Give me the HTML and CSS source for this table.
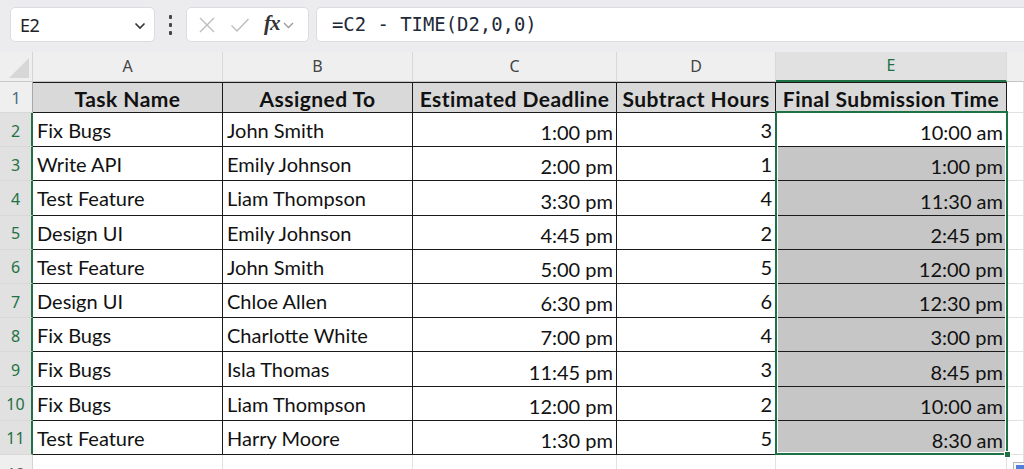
FILE: index.html
```html
<!DOCTYPE html>
<html lang="en">
<head>
<meta charset="utf-8">
<title>Sheet</title>
<link rel="stylesheet" href="styles.css">
</head>
<body>
<div class="app">
  <div class="toolbar">
    <div class="namebox">
      <span class="namebox-text">E2</span>
      <svg class="chev" width="12" height="8" viewBox="0 0 12 8"><path d="M1.5 1.5 L6 6 L10.5 1.5" fill="none" stroke="#333" stroke-width="1.6"/></svg>
    </div>
    <div class="dots"><span></span><span></span><span></span></div>
    <div class="fxbox">
      <svg class="ico" width="18" height="18" viewBox="0 0 18 18"><path d="M2 2 L16 16 M16 2 L2 16" stroke="#bdbdbd" stroke-width="1.4" fill="none"/></svg>
      <svg class="ico" width="20" height="18" viewBox="0 0 20 18"><path d="M1.5 9.5 L7 15 L18.5 3" stroke="#bdbdbd" stroke-width="1.4" fill="none"/></svg>
      <span class="fx">fx</span>
      <svg class="chev-sm" width="11" height="7" viewBox="0 0 11 7"><path d="M1 1 L5.5 5.5 L10 1" fill="none" stroke="#9a9a9a" stroke-width="1.3"/></svg>
    </div>
    <div class="formula">=C2 - TIME(D2,0,0)</div>
  </div>

  <div class="sheet">
    <div class="corner"><span class="tri"></span></div>
    <div class="colh">A</div>
    <div class="colh">B</div>
    <div class="colh">C</div>
    <div class="colh">D</div>
    <div class="colh sel">E</div>
    <div class="colh rest"></div>

    <div class="rowh">1</div>
    <div class="c hd">Task Name</div>
    <div class="c hd">Assigned To</div>
    <div class="c hd">Estimated Deadline</div>
    <div class="c hd">Subtract Hours</div>
    <div class="c hd">Final Submission Time</div>
    <div class="g"></div>

    <div class="rowh sel">2</div><div class="c t">Fix Bugs</div><div class="c t">John Smith</div><div class="c n">1:00 pm</div><div class="c h">3</div><div class="c n act">10:00 am</div><div class="g"></div>
    <div class="rowh sel">3</div><div class="c t">Write API</div><div class="c t">Emily Johnson</div><div class="c n">2:00 pm</div><div class="c h">1</div><div class="c n shade">1:00 pm</div><div class="g"></div>
    <div class="rowh sel">4</div><div class="c t">Test Feature</div><div class="c t">Liam Thompson</div><div class="c n">3:30 pm</div><div class="c h">4</div><div class="c n shade">11:30 am</div><div class="g"></div>
    <div class="rowh sel">5</div><div class="c t">Design UI</div><div class="c t">Emily Johnson</div><div class="c n">4:45 pm</div><div class="c h">2</div><div class="c n shade">2:45 pm</div><div class="g"></div>
    <div class="rowh sel">6</div><div class="c t">Test Feature</div><div class="c t">John Smith</div><div class="c n">5:00 pm</div><div class="c h">5</div><div class="c n shade">12:00 pm</div><div class="g"></div>
    <div class="rowh sel">7</div><div class="c t">Design UI</div><div class="c t">Chloe Allen</div><div class="c n">6:30 pm</div><div class="c h">6</div><div class="c n shade">12:30 pm</div><div class="g"></div>
    <div class="rowh sel">8</div><div class="c t">Fix Bugs</div><div class="c t">Charlotte White</div><div class="c n">7:00 pm</div><div class="c h">4</div><div class="c n shade">3:00 pm</div><div class="g"></div>
    <div class="rowh sel">9</div><div class="c t">Fix Bugs</div><div class="c t">Isla Thomas</div><div class="c n">11:45 pm</div><div class="c h">3</div><div class="c n shade">8:45 pm</div><div class="g"></div>
    <div class="rowh sel">10</div><div class="c t">Fix Bugs</div><div class="c t">Liam Thompson</div><div class="c n">12:00 pm</div><div class="c h">2</div><div class="c n shade">10:00 am</div><div class="g"></div>
    <div class="rowh sel">11</div><div class="c t">Test Feature</div><div class="c t">Harry Moore</div><div class="c n">1:30 pm</div><div class="c h">5</div><div class="c n shade">8:30 am</div><div class="g"></div>

    <div class="rowh last">12</div><div class="g"></div><div class="g"></div><div class="g"></div><div class="g"></div><div class="g"></div><div class="g"></div>

    <div class="selection"><span class="handle"></span></div>
    <div class="qa"></div>
  </div>
</div>
</body>
</html>
```
FILE: styles.css
```css
* { box-sizing: border-box; }
html, body { margin: 0; padding: 0; }
body { width: 1024px; height: 469px; overflow: hidden; background: #fff; font-family: "Lato", "Liberation Sans", sans-serif; }

.app { display: flex; flex-direction: column; height: 469px; }

.toolbar {
  height: 52px;
  background: #ecebee;
  display: flex;
  align-items: flex-start;
  padding: 7px 0 0 10px;
}
.namebox {
  width: 145px; height: 35px;
  background: #fff;
  border: 1px solid #dddbe0;
  border-radius: 5px;
  display: flex; align-items: center; justify-content: space-between;
  padding: 0 8px 0 9px;
  font-family: "Noto Sans", "Open Sans", sans-serif;
  font-size: 18px; color: #222;
}
.namebox-text { letter-spacing: -0.6px; }
.chev { margin-top: 2px; }
.dots {
  width: 31px; height: 35px;
  display: flex; flex-direction: column; align-items: center; justify-content: center; gap: 4px;
}
.dots span { width: 3px; height: 4px; background: #444; border-radius: 1px; }
.fxbox {
  width: 123px; height: 35px;
  background: #fff; border: 1px solid #dddbe0; border-radius: 5px;
  display: flex; align-items: center;
  padding: 0 0 0 11px;
}
.fxbox .ico { margin-right: 14px; }
.fx {
  font-family: "Liberation Serif", serif; font-style: italic; font-weight: bold;
  font-size: 21px; color: #333; letter-spacing: -1px; margin-right: 3px; margin-top: -2px;
}
.chev-sm { margin-top: 1px; }
.formula {
  margin-left: 7px;
  flex: 1; height: 35px;
  background: #fff; border: 1px solid #dddbe0; border-right: 0; border-radius: 5px 0 0 5px;
  font-family: "DejaVu Sans Mono", "Liberation Mono", monospace;
  font-size: 18.9px; color: #1e2a3a;
  display: flex; align-items: center;
  padding: 0 0 2px 15px;
}

.sheet {
  position: relative;
  flex: 1;
  display: grid;
  grid-template-columns: 33px 190px 190px 204px 159px 231px 1fr;
  grid-template-rows: 30px 31px repeat(10, 34.2px) 1fr;
  overflow: hidden;
}

.corner {
  background: #efefef; position: relative;
  border-right: 1px solid #d4d4d4; border-bottom: 1px solid #c8c8c8;
}
.tri {
  position: absolute; right: 3px; bottom: 3px;
  width: 0; height: 0;
  border-left: 20px solid transparent; border-bottom: 20px solid #d7d7d7;
}
.colh {
  background: #efefef;
  border-right: 1px solid #d9d9d9;
  border-bottom: 1px solid #c4c4c4;
  display: flex; align-items: center; justify-content: center;
  font-family: "Noto Sans", "Open Sans", sans-serif; font-size: 16px; color: #444;
  padding-bottom: 2px;
}
.colh.sel { background: #e1e1e1; color: #1e7145; border-bottom: 2px solid #1e7145; }
.colh.rest { border-right: 0; }

.rowh {
  background: #efefef;
  border-right: 1px solid #a8a8a8;
  border-bottom: 1px solid #d8d8d8;
  display: flex; align-items: center; justify-content: center;
  font-family: "Noto Sans", "Open Sans", sans-serif; font-size: 16px; color: #4a6a86;
  padding-top: 2px;
}
.rowh.sel { background: #e1e1e1; color: #1e7145; border-right: 2px solid #1e7145; }
.rowh.last { align-items: flex-start; padding-top: 8px; color: #555; border-right-color: #d4d4d4; }

.c {
  border-right: 1px solid #1b1b1b;
  border-bottom: 1px solid #1b1b1b;
  font-size: 20px; color: #111;
  display: flex; white-space: nowrap; overflow: hidden;
}
.hd {
  background: #d9d9d9; font-weight: bold; font-size: 21px; letter-spacing: 0.45px;
  border-top: 1px solid #1b1b1b;
  justify-content: center; align-items: center;
  padding-top: 1px;
}
.t { align-items: center; padding-left: 4px; padding-top: 1px; }
.n, .h { justify-content: flex-end; align-items: flex-end; padding-right: 3px; padding-bottom: 2px; }
.h { align-items: center; padding-bottom: 0; padding-top: 1px; }
.shade { background: #c6c6c6; }

.g { border-right: 1px solid #e1e1e1; border-bottom: 1px solid #e1e1e1; }

.selection {
  position: absolute;
  left: 775px; top: 59px; width: 233px; height: 344px;
  border: 2px solid #1e7145;
  box-shadow: inset 0 0 0 1px #fff;
  z-index: 2;
}
.handle {
  position: absolute; right: -5px; bottom: -5px;
  width: 7px; height: 7px; background: #1e7145; border: 1px solid #fff;
}
.qa {
  position: absolute; left: 1013px; top: 410px;
  width: 14px; height: 14px;
  border: 1px solid #b5b5b5; background: #f7f7f7;
}
.qa::after { content: ""; position: absolute; left: 2px; top: 2px; width: 8px; height: 4px; background: #4f7fd9; }
```
